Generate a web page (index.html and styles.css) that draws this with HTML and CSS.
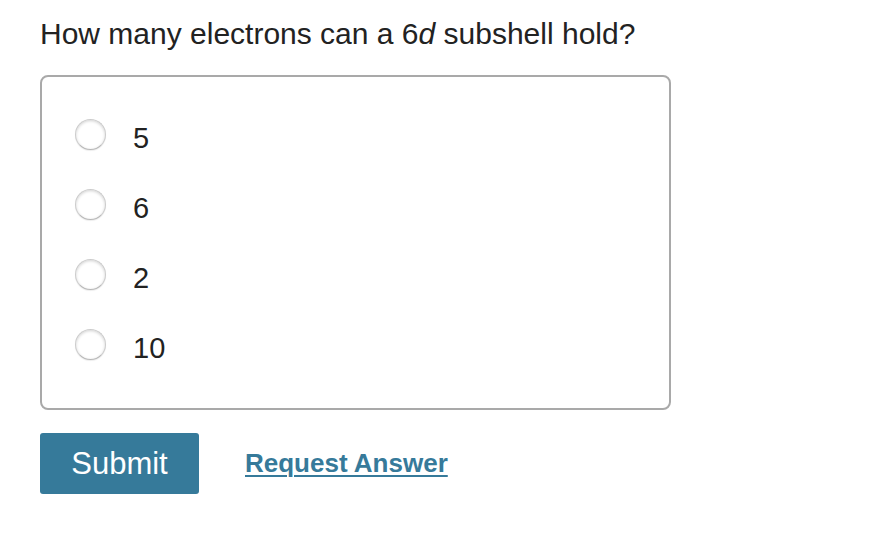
FILE: index.html
```html
<!DOCTYPE html>
<html>
<head>
<meta charset="utf-8">
<link rel="stylesheet" href="styles.css">
</head>
<body>
<div class="page">
  <h1 class="question">How many electrons can a 6<i>d</i> subshell hold?</h1>
  <div class="choices">
    <label class="choice"><span class="radio"></span><span class="label">5</span></label>
    <label class="choice"><span class="radio"></span><span class="label">6</span></label>
    <label class="choice"><span class="radio"></span><span class="label">2</span></label>
    <label class="choice"><span class="radio"></span><span class="label">10</span></label>
  </div>
  <div class="actions">
    <button class="submit">Submit</button>
    <a class="request" href="#">Request Answer</a>
  </div>
</div>
</body>
</html>
```

FILE: styles.css
```css
html, body {
  margin: 0;
  padding: 0;
  background: #fff;
}
body {
  font-family: "Liberation Sans", Arial, Helvetica, sans-serif;
  color: #222;
}
.page {
  padding: 17px 40px 0 40px;
}
.question {
  font-size: 30px;
  font-weight: normal;
  margin: 0;
  line-height: 34px;
  color: #222;
}
.choices {
  margin-top: 24px;
  width: 631px;
  height: 335px;
  box-sizing: border-box;
  border: 2px solid #a9a9a9;
  border-radius: 8px;
  padding: 42px 0 0 33px;
  display: flex;
  flex-direction: column;
  gap: 39px;
}
.choice {
  display: flex;
  align-items: flex-start;
  height: 31px;
}
.radio {
  width: 29px;
  height: 29px;
  border-radius: 50%;
  border: 1px solid #cccccc;
  border-bottom-color: #b8b8b8;
  box-shadow: inset 0 1px 3px rgba(0,0,0,0.18), 0 1px 1px rgba(0,0,0,0.08);
  background: #fff;
  flex: none;
}
.label {
  margin-left: 27px;
  padding-top: 4px;
  font-size: 29px;
  line-height: 31px;
  color: #222;
}
.actions {
  margin-top: 23px;
  display: flex;
  align-items: center;
}
.submit {
  width: 159px;
  height: 61px;
  background: #367a9a;
  color: #fff;
  border: none;
  border-radius: 3px;
  font-family: "Liberation Sans", Arial, Helvetica, sans-serif;
  font-size: 31px;
  padding: 0;
}
.request {
  margin-left: 46px;
  color: #367a9a;
  font-weight: bold;
  font-size: 26px;
  text-decoration: underline;
  text-decoration-thickness: 2px;
  text-underline-offset: 3px;
}
```
